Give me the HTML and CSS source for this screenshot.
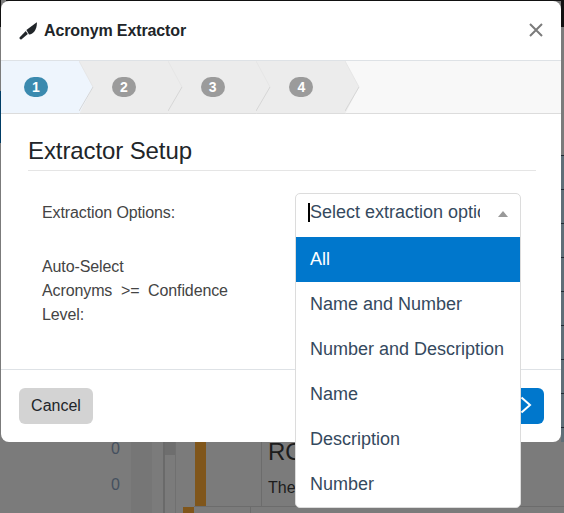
FILE: index.html
```html
<!DOCTYPE html>
<html lang="en">
<head>
<meta charset="UTF-8">
<meta name="viewport" content="width=device-width, initial-scale=1.0">
<title>Acronym Extractor</title>
<link rel="stylesheet" href="styles.css">
</head>
<body>
<div class="backdrop">
  <div class="bg-top"></div>
  <div class="bg-corner-left"></div>
  <div class="bg-corner-right"></div>
  <div class="bg-blue-edge"></div>
  <div class="bg-table-edge"></div>
  <span class="bg-num bg-num-1">0</span>
  <span class="bg-num bg-num-2">0</span>
  <div class="bg-column"></div>
  <div class="bg-track"></div>
  <div class="bg-bar"></div>
  <div class="bg-bar-low"></div>
  <div class="bg-rule"></div>
  <div class="bg-card">
    <div class="bg-title">RO</div>
    <div class="bg-text">The</div>
  </div>
</div>

<div class="modal">
  <div class="modal-header">
    <h1 class="modal-title">
      <svg class="title-icon" viewBox="0 0 18 18" width="18" height="18">
        <path d="M17.8.2L7.4 8 10 12.4C14.4 12.6 18.4 6.8 17.8.2Z" fill="#212529"/>
        <path d="M6.8 9L8.8 12 2.6 17.2C1.5 17.9.1 16.8.5 15.5Z" fill="#212529"/>
      </svg>
      Acronym Extractor
    </h1>
    <svg class="close-icon" viewBox="0 0 14 14" width="14" height="14">
      <path d="M1 1L13 13M13 1L1 13" stroke="#7b7b7b" stroke-width="2" fill="none"/>
    </svg>
  </div>

  <div class="steps">
    <div class="step step-active">
      <span class="badge badge-active">1</span>
      <svg class="step-tip" viewBox="0 0 16 53" width="16" height="53">
        <polygon points="0,0 14,26 0,53" fill="#eef5fd"/>
        <line x1="0" y1="0" x2="14" y2="26" stroke="#e6e6e6"/>
        <line x1="14" y1="26" x2="0" y2="50" stroke="#d6d6d6"/>
      </svg>
    </div>
    <div class="step">
      <span class="badge">2</span>
      <svg class="step-tip" viewBox="0 0 16 53" width="16" height="53">
        <polygon points="0,0 14,26 0,53" fill="#ececec"/>
        <line x1="0" y1="0" x2="14" y2="26" stroke="#e6e6e6"/>
        <line x1="14" y1="26" x2="0" y2="50" stroke="#d6d6d6"/>
      </svg>
    </div>
    <div class="step">
      <span class="badge">3</span>
      <svg class="step-tip" viewBox="0 0 16 53" width="16" height="53">
        <polygon points="0,0 14,26 0,53" fill="#ececec"/>
        <line x1="0" y1="0" x2="14" y2="26" stroke="#e6e6e6"/>
        <line x1="14" y1="26" x2="0" y2="50" stroke="#d6d6d6"/>
      </svg>
    </div>
    <div class="step">
      <span class="badge">4</span>
      <svg class="step-tip" viewBox="0 0 16 53" width="16" height="53">
        <polygon points="0,0 14,26 0,53" fill="#ececec"/>
        <line x1="0" y1="0" x2="14" y2="26" stroke="#e6e6e6"/>
        <line x1="14" y1="26" x2="0" y2="50" stroke="#d6d6d6"/>
      </svg>
    </div>
  </div>

  <div class="modal-body">
    <h2 class="section-title">Extractor Setup</h2>
    <div class="form-row">
      <label class="form-label">Extraction Options:</label>
    </div>
    <div class="form-row">
      <label class="form-label">Auto-Select<br>Acronyms &nbsp;&gt;=&nbsp; Confidence<br>Level:</label>
    </div>
  </div>

  <div class="modal-footer">
    <button type="button" class="btn btn-cancel">Cancel</button>
    <button type="button" class="btn btn-next">
      <svg viewBox="0 0 12 18" width="12" height="18">
        <path d="M1.5 1.5L10 9 1.5 16.5" stroke="#fff" stroke-width="2" fill="none"/>
      </svg>
    </button>
  </div>

  <div class="multiselect">
    <div class="multiselect-tags">
      <span class="multiselect-cursor"></span>
      <span class="multiselect-placeholder">Select extraction options</span>
      <span class="multiselect-caret"></span>
    </div>
    <ul class="multiselect-list">
      <li class="multiselect-option highlight">All</li>
      <li class="multiselect-option">Name and Number</li>
      <li class="multiselect-option">Number and Description</li>
      <li class="multiselect-option">Name</li>
      <li class="multiselect-option">Description</li>
      <li class="multiselect-option">Number</li>
    </ul>
  </div>
</div>
</body>
</html>
```

FILE: styles.css
```css
* {
  box-sizing: border-box;
}
html, body {
  height: 100%;
}
body {
  margin: 0;
  overflow: hidden;
  position: relative;
  background-color: #7b7b7b;
  font-family: "Liberation Sans", Arial, sans-serif;
}

/* page behind the modal */
.backdrop {
  position: absolute;
  inset: 0;
  overflow: hidden;
}
.backdrop > * {
  position: absolute;
}
.bg-top {
  left: 0;
  top: 0;
  width: 100%;
  height: 1px;
  background-color: #111;
}
.bg-corner-left {
  left: 0;
  top: 0;
  width: 6px;
  height: 27px;
  background: linear-gradient(90deg, #111 1px, #7b7b7b 1px);
}
.bg-corner-right {
  right: 0;
  top: 0;
  width: 3px;
  height: 27px;
  background-color: #111;
}
.bg-blue-edge {
  left: 0;
  top: 91px;
  width: 1px;
  height: 52px;
  background-color: #003d66;
}
.bg-table-edge {
  right: 0;
  top: 155px;
  width: 3px;
  height: 287px;
  background: repeating-linear-gradient(#1f2a33 0, #1f2a33 1px, #5f6f78 1px, #5f6f78 34px);
}
.bg-num {
  left: 111px;
  font-size: 16px;
  line-height: 18px;
  color: #45505f;
}
.bg-num-1 {
  top: 440px;
}
.bg-num-2 {
  top: 476px;
}
.bg-column {
  left: 131px;
  top: 442px;
  width: 21px;
  height: 71px;
  background-color: #767676;
}
.bg-track {
  left: 163px;
  top: 442px;
  width: 13px;
  height: 71px;
  border-left: 2px solid #6a6a6a;
  border-right: 1px solid #707070;
  background: linear-gradient(#6e6e6e 13px, #7b7b7b 13px);
}
.bg-bar {
  left: 195px;
  top: 442px;
  width: 11px;
  height: 64px;
  background-color: #80561b;
}
.bg-bar-low {
  left: 183px;
  top: 507px;
  width: 11px;
  height: 6px;
  background-color: #80561b;
}
.bg-rule {
  left: 194px;
  top: 506px;
  width: 370px;
  height: 7px;
  border-top: 1px solid #6c6c6c;
  background: linear-gradient(90deg, transparent 56px, #6c6c6c 56px, #6c6c6c 57px, transparent 57px);
}
.bg-card {
  left: 261px;
  top: 435px;
  width: 300px;
  height: 71px;
  padding: 0 6px;
  border-left: 1px solid #6c6c6c;
  color: #1c1c1c;
}
.bg-title {
  font-size: 24px;
  line-height: 34px;
}
.bg-text {
  margin-top: 10px;
  font-size: 16px;
  line-height: 18px;
}

.modal {
  position: absolute;
  left: 1px;
  top: 1px;
  width: 560px;
  height: 441px;
  background-color: #fff;
  border-radius: 8px;
  display: flex;
  flex-direction: column;
}
.modal-header {
  height: 60px;
  padding: 0 18px;
  border-bottom: 1px solid #dee2e6;
  display: flex;
  align-items: center;
  justify-content: space-between;
}
.modal-title {
  margin: 0;
  font-size: 16px;
  font-weight: 700;
  letter-spacing: -.12px;
  color: #212529;
  display: flex;
  align-items: center;
  gap: 7px;
}
.close-icon {
  margin-bottom: 2px;
}

.steps {
  height: 53px;
  background-color: #f8f8f8;
  border-bottom: 1px solid #dcdcdc;
  display: flex;
}
.step {
  position: relative;
  width: 88.7px;
  height: 52px;
  background-color: #ececec;
  display: flex;
  align-items: center;
  padding-left: 33px;
}
.step-active {
  width: 78px;
  padding-left: 23px;
  background-color: #eef5fd;
}
.step-tip {
  position: absolute;
  left: 100%;
  top: 0;
  z-index: 1;
}
.badge {
  width: 24px;
  height: 20px;
  border-radius: 10px;
  background-color: #9b9b9b;
  color: #fff;
  font-size: 14px;
  font-weight: 700;
  line-height: 20px;
  text-align: center;
}
.badge-active {
  background-color: #3b8aaf;
}

.modal-body {
  flex: 1;
  padding: 22px 25px 0 27px;
}
.section-title {
  margin: 0;
  padding-bottom: 5px;
  border-bottom: 1px solid #e5e5e5;
  font-size: 24px;
  font-weight: 400;
  line-height: 29px;
  letter-spacing: -.1px;
  color: #212529;
}
.form-row {
  padding-left: 14px;
  margin-top: 30px;
}
.form-label {
  display: block;
  font-size: 16px;
  line-height: 24px;
  letter-spacing: -.11px;
  color: #444;
}

.modal-footer {
  height: 73px;
  padding: 18px 17px 0 18px;
  border-top: 1px solid #dee2e6;
  display: flex;
  justify-content: space-between;
  align-items: flex-start;
}
.btn {
  height: 36px;
  border: none;
  border-radius: 6px;
  font-family: inherit;
  font-size: 16px;
}
.btn-cancel {
  width: 74px;
  background-color: #d3d3d3;
  color: #212529;
}
.btn-next {
  width: 60px;
  padding: 0 12px 3px 0;
  background-color: #0077cc;
  display: flex;
  align-items: center;
  justify-content: flex-end;
}

/* open dropdown, hangs over the modal */
.multiselect {
  position: absolute;
  left: 294px;
  top: 192px;
  width: 226px;
  height: 315px;
  z-index: 2;
  background-color: #fff;
  border: 1px solid #dcdcdc;
  border-radius: 5px;
  color: #35495e;
  font-size: 18px;
}
.multiselect-tags {
  position: relative;
  height: 43px;
  padding: 7px 40px 0 14px;
  line-height: 22px;
  overflow: hidden;
}
.multiselect-placeholder {
  display: block;
  white-space: nowrap;
  overflow: hidden;
}
.multiselect-cursor {
  position: absolute;
  left: 12px;
  top: 9px;
  width: 2px;
  height: 19px;
  background-color: #000;
}
.multiselect-caret {
  position: absolute;
  right: 12px;
  top: 17px;
  border-left: 5.5px solid transparent;
  border-right: 5.5px solid transparent;
  border-bottom: 6px solid #999;
}
.multiselect-list {
  margin: 0;
  padding: 0;
  list-style: none;
}
.multiselect-option {
  height: 45px;
  padding: 0 14px;
  line-height: 45px;
  white-space: nowrap;
}
.highlight {
  background-color: #0077cc;
  color: #fff;
}
```
